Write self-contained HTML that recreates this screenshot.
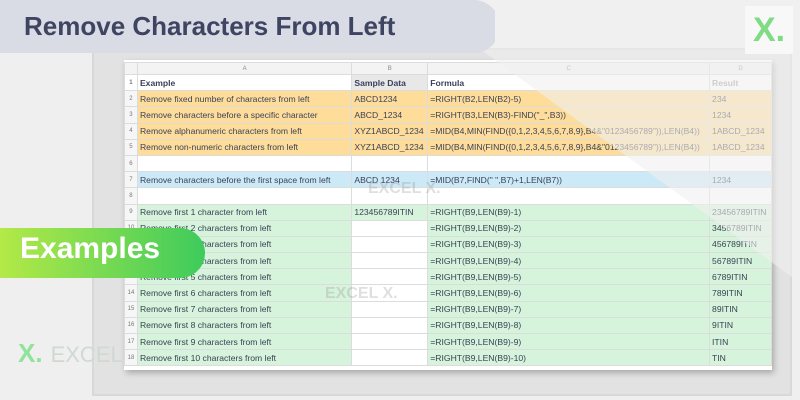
<!DOCTYPE html>
<html><head><style>
*{margin:0;padding:0;box-sizing:border-box}
body{width:800px;height:400px;overflow:hidden;background:#efefef;font-family:"Liberation Sans",sans-serif;position:relative}
.frame{position:absolute;left:92px;top:48px;width:700px;height:348px;background:#e2e2e2;border:2px solid #d8d8d8}
.sheet{position:absolute;left:124px;top:60px;width:648px;height:310px;background:#fff;box-shadow:2px 3px 6px rgba(0,0,0,.25)}
table{border-collapse:collapse;position:absolute;left:0;top:2px;font-size:8.6px;color:#3c4058;table-layout:fixed}
td{height:16.2px;border:1px solid #dcdcdc;padding:0 2px;white-space:nowrap;overflow:hidden}
td.n{width:13px;font-size:6px;color:#777;text-align:center;background:#f6f6f6}
tr.h td{height:12px;font-size:6px;color:#888;text-align:center;background:#f3f3f3}
.o td{background:#fedd9a}.b td{background:#cbe9f6}.g td{background:#d6f3dc}
.o td.n,.b td.n,.g td.n{background:#f6f6f6}
.g td.w{background:#fff}
.hd td{font-weight:bold;background:#fff}
.banner{position:absolute;left:0;top:0;width:500px;height:53px;background:#d9dbe5;border-radius:0 30px 30px 0;clip-path:polygon(0 0,495px 0,495px 53px,0 53px)}
.title{position:absolute;left:24px;top:11px;font-size:26px;font-weight:bold;color:#3e4461}
.wash{position:absolute;left:0;top:0;width:800px;height:400px;background:rgba(240,240,240,.6);clip-path:polygon(413px 0,800px 0,800px 283px)}
.ex{position:absolute;left:0;top:228px;width:205px;height:50px;border-radius:0 26px 26px 0;background:linear-gradient(90deg,#b4e947,#3ecb5c);color:#fff;font-size:30px;font-weight:bold;padding:4px 0 0 20px}
.logo{position:absolute;left:745px;top:6px;width:48px;height:48px;background:#f8f8f8;color:#7fdb84;font-weight:bold;font-size:34px;text-align:center;line-height:48px}
.bl{position:absolute;left:18px;top:338px;color:#8fe39a;font-size:26px;font-weight:bold}
.bl span{color:#cfd9d2;font-weight:normal;font-size:22px;margin-left:8px}
.wm{position:absolute;color:rgba(150,150,150,.3);font-weight:bold;font-size:16px}
</style></head><body>
<div class="frame"></div>
<div class="sheet">
<table>
<colgroup><col style="width:13px"><col style="width:215px"><col style="width:76px"><col style="width:282px"><col style="width:62px"></colgroup>
<tr class="h"><td class="n"></td><td>A</td><td>B</td><td>C</td><td>D</td></tr>
<tr class="hd"><td class="n">1</td><td>Example</td><td style="background:#e8e8e8">Sample Data</td><td>Formula</td><td style="color:#999">Result</td></tr>
<tr class="o"><td class="n">2</td><td>Remove fixed number of characters from left</td><td>ABCD1234</td><td>=RIGHT(B2,LEN(B2)-5)</td><td>234</td></tr>
<tr class="o"><td class="n">3</td><td>Remove characters before a specific character</td><td>ABCD_1234</td><td>=RIGHT(B3,LEN(B3)-FIND("_",B3))</td><td>1234</td></tr>
<tr class="o"><td class="n">4</td><td>Remove alphanumeric characters from left</td><td>XYZ1ABCD_1234</td><td>=MID(B4,MIN(FIND({0,1,2,3,4,5,6,7,8,9},B4&amp;"0123456789")),LEN(B4))</td><td>1ABCD_1234</td></tr>
<tr class="o"><td class="n">5</td><td>Remove non-numeric characters from left</td><td>XYZ1ABCD_1234</td><td>=MID(B4,MIN(FIND({0,1,2,3,4,5,6,7,8,9},B4&amp;"0123456789")),LEN(B4))</td><td>1ABCD_1234</td></tr>
<tr><td class="n">6</td><td></td><td></td><td></td><td></td></tr>
<tr class="b"><td class="n">7</td><td>Remove characters before the first space from left</td><td>ABCD 1234</td><td>=MID(B7,FIND(" ",B7)+1,LEN(B7))</td><td>1234</td></tr>
<tr><td class="n">8</td><td></td><td></td><td></td><td></td></tr>
<tr class="g"><td class="n">9</td><td>Remove first 1 character from left</td><td>123456789ITIN</td><td>=RIGHT(B9,LEN(B9)-1)</td><td>23456789ITIN</td></tr>
<tr class="g"><td class="n">10</td><td>Remove first 2 characters from left</td><td class="w"></td><td>=RIGHT(B9,LEN(B9)-2)</td><td>3456789ITIN</td></tr>
<tr class="g"><td class="n">11</td><td>Remove first 3 characters from left</td><td class="w"></td><td>=RIGHT(B9,LEN(B9)-3)</td><td>456789ITIN</td></tr>
<tr class="g"><td class="n">12</td><td>Remove first 4 characters from left</td><td class="w"></td><td>=RIGHT(B9,LEN(B9)-4)</td><td>56789ITIN</td></tr>
<tr class="g"><td class="n">13</td><td>Remove first 5 characters from left</td><td class="w"></td><td>=RIGHT(B9,LEN(B9)-5)</td><td>6789ITIN</td></tr>
<tr class="g"><td class="n">14</td><td>Remove first 6 characters from left</td><td class="w"></td><td>=RIGHT(B9,LEN(B9)-6)</td><td>789ITIN</td></tr>
<tr class="g"><td class="n">15</td><td>Remove first 7 characters from left</td><td class="w"></td><td>=RIGHT(B9,LEN(B9)-7)</td><td>89ITIN</td></tr>
<tr class="g"><td class="n">16</td><td>Remove first 8 characters from left</td><td class="w"></td><td>=RIGHT(B9,LEN(B9)-8)</td><td>9ITIN</td></tr>
<tr class="g"><td class="n">17</td><td>Remove first 9 characters from left</td><td class="w"></td><td>=RIGHT(B9,LEN(B9)-9)</td><td>ITIN</td></tr>
<tr class="g"><td class="n">18</td><td>Remove first 10 characters from left</td><td class="w"></td><td>=RIGHT(B9,LEN(B9)-10)</td><td>TIN</td></tr>
</table>
</div>
<div class="wm" style="left:368px;top:180px">EXCEL X.</div>
<div class="wm" style="left:325px;top:285px">EXCEL X.</div>
<div class="wash"></div>
<div class="banner"></div>
<div class="title">Remove Characters From Left</div>
<div class="logo">X.</div>
<div class="ex">Examples</div>
<div class="bl">X.<span>EXCEL</span></div>
</body></html>
